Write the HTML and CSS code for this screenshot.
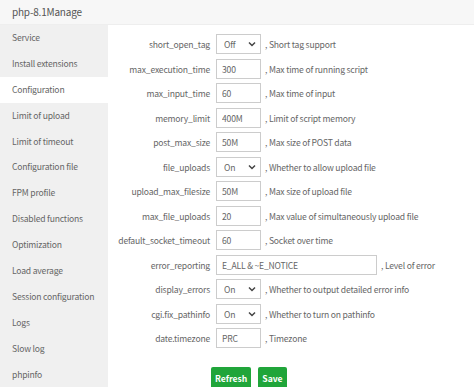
FILE: index.html
```html
<!DOCTYPE html>
<html lang="en">
<head>
    <meta charset="UTF-8">
    <title>php-8.1Manage</title>
    <link rel="stylesheet" href="styles.css">
</head>
<body>
    <div class="header">php-8.1Manage</div>
    <div class="main">
        <!-- 左侧菜单 -->
        <ul class="sidebar">
            <li>Service</li>
            <li>Install extensions</li>
            <li class="active">Configuration</li>
            <li>Limit of upload</li>
            <li>Limit of timeout</li>
            <li>Configuration file</li>
            <li>FPM profile</li>
            <li>Disabled functions</li>
            <li>Optimization</li>
            <li>Load average</li>
            <li>Session configuration</li>
            <li>Logs</li>
            <li>Slow log</li>
            <li>phpinfo</li>
        </ul>

        <!-- 配置表单 -->
        <form class="content">
            <div class="row">
                <label>short_open_tag</label>
                <div class="select-wrap">
                    <select name="short_open_tag"><option>Off</option><option>On</option></select>
                    <svg class="arrow" viewBox="0 0 10 10"><path d="M2 3.5 L5 6.5 L8 3.5" /></svg>
                </div>
                <span class="desc">, Short tag support</span>
            </div>
            <div class="row">
                <label>max_execution_time</label>
                <input type="text" value="300">
                <span class="desc">, Max time of running script</span>
            </div>
            <div class="row">
                <label>max_input_time</label>
                <input type="text" value="60">
                <span class="desc">, Max time of input</span>
            </div>
            <div class="row">
                <label>memory_limit</label>
                <input type="text" value="400M">
                <span class="desc">, Limit of script memory</span>
            </div>
            <div class="row">
                <label>post_max_size</label>
                <input type="text" value="50M">
                <span class="desc">, Max size of POST data</span>
            </div>
            <div class="row">
                <label>file_uploads</label>
                <div class="select-wrap">
                    <select name="file_uploads"><option>On</option><option>Off</option></select>
                    <svg class="arrow" viewBox="0 0 10 10"><path d="M2 3.5 L5 6.5 L8 3.5" /></svg>
                </div>
                <span class="desc">, Whether to allow upload file</span>
            </div>
            <div class="row">
                <label>upload_max_filesize</label>
                <input type="text" value="50M">
                <span class="desc">, Max size of upload file</span>
            </div>
            <div class="row">
                <label>max_file_uploads</label>
                <input type="text" value="20">
                <span class="desc">, Max value of simultaneously upload file</span>
            </div>
            <div class="row">
                <label>default_socket_timeout</label>
                <input type="text" value="60">
                <span class="desc">, Socket over time</span>
            </div>
            <div class="row">
                <label>error_reporting</label>
                <input type="text" class="wide" value="E_ALL &amp; ~E_NOTICE">
                <span class="desc">, Level of error</span>
            </div>
            <div class="row">
                <label>display_errors</label>
                <div class="select-wrap">
                    <select name="display_errors"><option>On</option><option>Off</option></select>
                    <svg class="arrow" viewBox="0 0 10 10"><path d="M2 3.5 L5 6.5 L8 3.5" /></svg>
                </div>
                <span class="desc">, Whether to output detailed error info</span>
            </div>
            <div class="row">
                <label>cgi.fix_pathinfo</label>
                <div class="select-wrap">
                    <select name="cgi_fix_pathinfo"><option>On</option><option>Off</option></select>
                    <svg class="arrow" viewBox="0 0 10 10"><path d="M2 3.5 L5 6.5 L8 3.5" /></svg>
                </div>
                <span class="desc">, Whether to turn on pathinfo</span>
            </div>
            <div class="row">
                <label>date.timezone</label>
                <input type="text" value="PRC">
                <span class="desc">, Timezone</span>
            </div>
            <div class="buttons">
                <button type="button">Refresh</button>
                <button type="button">Save</button>
            </div>
        </form>
    </div>
</body>
</html>
```

FILE: styles.css
```css
:root {
    --green: #20a53a;
    --text: #666;
}
* {
    box-sizing: border-box;
}
body {
    margin: 0;
    font-family: "Noto Sans CJK SC", "Liberation Sans", sans-serif;
    font-size: 8.6px;
    letter-spacing: -0.2px;
    color: var(--text);
    background: #fff;
    overflow: hidden;
}
.header {
    height: 25px;
    line-height: 24px;
    padding-left: 12px;
    font-size: 10px;
    color: #555;
    background: #f7f7f7;
    border-bottom: 1px solid #eee;
}
.main {
    display: flex;
    height: 362px;
}
.sidebar {
    list-style: none;
    margin: 0;
    padding: 0;
    width: 108px;
    flex: none;
    background: #f0f0f0;
}
.sidebar li {
    height: 25.9px;
    line-height: 25.9px;
    padding-left: 12px;
    white-space: nowrap;
}
.sidebar li.active {
    background: #fff;
}
.content {
    flex: 1;
    padding-top: 9px;
    display: flex;
    flex-direction: column;
    gap: 4.5px;
}
.row {
    display: flex;
    align-items: center;
    height: 20px;
}
.row label {
    width: 102px;
    flex: none;
    text-align: right;
    margin-right: 6px;
    white-space: nowrap;
}
.row input,
.row select {
    width: 45px;
    height: 20px;
    padding: 0 0 0 5px;
    border: 1px solid #ccc;
    border-radius: 0;
    font: inherit;
    letter-spacing: inherit;
    color: #666;
    background: #fff;
    outline: none;
}
.row input.wide {
    width: 161px;
}
.select-wrap {
    position: relative;
    width: 45px;
    height: 20px;
}
.select-wrap select {
    appearance: none;
    -webkit-appearance: none;
    padding-left: 7px;
}
.select-wrap .arrow {
    position: absolute;
    right: 4px;
    top: 5px;
    width: 10px;
    height: 10px;
    pointer-events: none;
}
.arrow path {
    fill: none;
    stroke: #444;
    stroke-width: 1.5;
}
.desc {
    margin-left: 4px;
    white-space: nowrap;
}
.buttons {
    display: flex;
    gap: 7px;
    margin-top: 14px;
    padding-left: 103px;
}
.buttons button {
    height: 22px;
    padding: 0 4px;
    border: none;
    border-radius: 2px;
    background: var(--green);
    color: #fff;
    font: inherit;
    font-weight: bold;
    cursor: pointer;
}
```
